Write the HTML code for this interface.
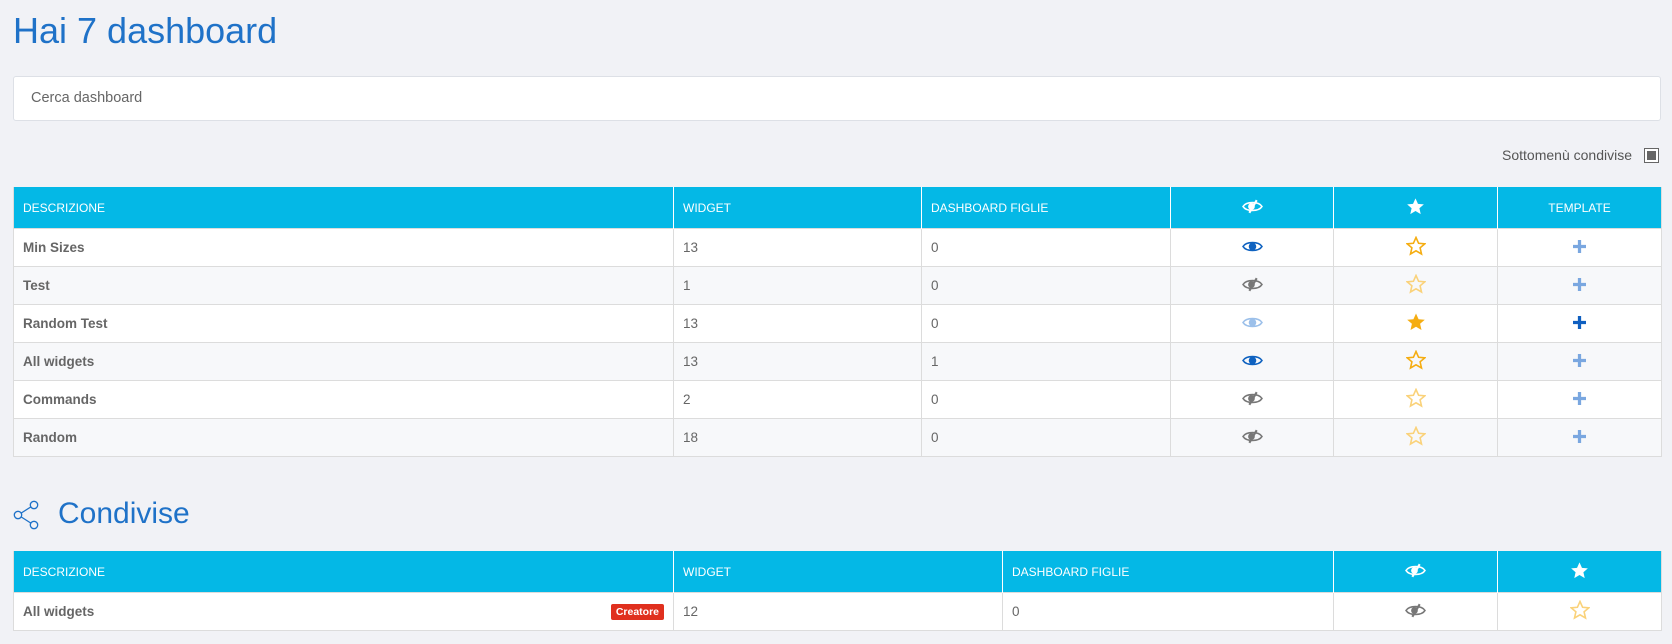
<!DOCTYPE html>
<html><head><meta charset="utf-8"><style>
body{margin:0;background:#f1f2f6;font-family:"Liberation Sans",sans-serif;width:1672px;height:644px;overflow:hidden;position:relative}
h1{position:absolute;left:13px;top:10px;margin:0;font-weight:normal;font-size:36px;color:#1f72c8}
.search{position:absolute;left:13px;top:76px;width:1648px;height:45px;background:#fff;border:1px solid #dde0e6;border-radius:3px;box-sizing:border-box;padding:13px 17px;font-size:14.5px;color:#666}
.sub{position:absolute;right:40px;top:147px;font-size:14px;color:#555}
.cb{position:absolute;left:1644px;top:148px;width:15px;height:15px;border:1px solid #666;background:#fff;box-sizing:border-box}
.cb:after{content:"";position:absolute;left:2px;top:2px;width:9px;height:9px;background:#666}
table{position:absolute;left:13px;border-collapse:collapse;table-layout:fixed;width:1649px;font-size:13.5px}
th{background:#04b8e6;color:#fff;font-weight:normal;font-size:12px;text-align:left;height:41px;padding:0 9px;border-left:1px solid #fff;border-right:1px solid #fff}
th:first-child{border-left:1px solid #dcdcdc}th:last-child{border-right:1px solid #dcdcdc}
td{height:37px;padding:0 9px;border:1px solid #dcdcdc;color:#666;background:#fff}
tr.g td{background:#f7f8fa}
td.b{font-weight:bold}
.c{text-align:center}
h2{position:absolute;left:58px;top:497px;margin:0;font-weight:normal;font-size:30px;color:#1f72c8}
.badge{float:right;background:#e0301e;color:#fff;font-size:10.5px;font-weight:bold;padding:2px 5px;border-radius:2px}
</style></head><body>
<h1>Hai 7 dashboard</h1>
<div class="search">Cerca dashboard</div>
<div class="sub">Sottomenù condivise</div><div class="cb"></div>
<svg width="0" height="0" style="position:absolute"><defs>
<symbol id="eye" viewBox="0 0 20 12"><path d="M1 6C4 1 16 1 19 6C16 11 4 11 1 6Z" fill="none" stroke="currentColor" stroke-width="1.6"/><circle cx="10" cy="6" r="3.6" fill="currentColor"/></symbol>
<symbol id="eyes" viewBox="0 0 20 14"><path d="M1 7C4 2 16 2 19 7C16 12 4 12 1 7Z" fill="none" stroke="currentColor" stroke-width="1.6"/><circle cx="9" cy="7" r="3.2" fill="currentColor"/><path d="M14 1L7 13" stroke="currentColor" stroke-width="2"/></symbol>
<symbol id="star" viewBox="0 0 20 20"><path d="M10 1.5L12.6 7.3L18.8 7.8L14.1 11.8L15.5 18L10 14.8L4.5 18L5.9 11.8L1.2 7.8L7.4 7.3Z"/></symbol>
<symbol id="plus" viewBox="0 0 12 12"><path d="M6 0V12M0 6H12" stroke="currentColor" stroke-width="3"/></symbol>
</defs></svg>
<table style="top:187px">
<colgroup><col style="width:660px"><col style="width:248px"><col style="width:249px"><col style="width:163px"><col style="width:164px"><col></colgroup>
<tr><th>DESCRIZIONE</th><th>WIDGET</th><th>DASHBOARD FIGLIE</th><th class="c"><svg width="21" height="15" style="color:#fff"><use href="#eyes"/></svg></th><th class="c"><svg width="19" height="19" fill="#fff"><use href="#star"/></svg></th><th class="c">TEMPLATE</th></tr>
<tr><td class="b">Min Sizes</td><td>13</td><td>0</td><td class="c"><svg width="21" height="13" style="color:#0f62c0"><use href="#eye"/></svg></td><td class="c"><svg width="20" height="20" fill="none" stroke="#f5ad12" stroke-width="1.6"><use href="#star"/></svg></td><td class="c"><svg width="13" height="13" style="color:#7aa7e0"><use href="#plus"/></svg></td></tr>
<tr class="g"><td class="b">Test</td><td>1</td><td>0</td><td class="c"><svg width="21" height="15" style="color:#777"><use href="#eyes"/></svg></td><td class="c"><svg width="20" height="20" fill="none" stroke="#fad27a" stroke-width="1.6"><use href="#star"/></svg></td><td class="c"><svg width="13" height="13" style="color:#7aa7e0"><use href="#plus"/></svg></td></tr>
<tr><td class="b">Random Test</td><td>13</td><td>0</td><td class="c"><svg width="21" height="13" style="color:#9cc0ea"><use href="#eye"/></svg></td><td class="c"><svg width="20" height="20" fill="#f5ad12"><use href="#star"/></svg></td><td class="c"><svg width="13" height="13" style="color:#0f5fc0"><use href="#plus"/></svg></td></tr>
<tr class="g"><td class="b">All widgets</td><td>13</td><td>1</td><td class="c"><svg width="21" height="13" style="color:#0f62c0"><use href="#eye"/></svg></td><td class="c"><svg width="20" height="20" fill="none" stroke="#f5ad12" stroke-width="1.6"><use href="#star"/></svg></td><td class="c"><svg width="13" height="13" style="color:#7aa7e0"><use href="#plus"/></svg></td></tr>
<tr><td class="b">Commands</td><td>2</td><td>0</td><td class="c"><svg width="21" height="15" style="color:#777"><use href="#eyes"/></svg></td><td class="c"><svg width="20" height="20" fill="none" stroke="#fad27a" stroke-width="1.6"><use href="#star"/></svg></td><td class="c"><svg width="13" height="13" style="color:#7aa7e0"><use href="#plus"/></svg></td></tr>
<tr class="g"><td class="b">Random</td><td>18</td><td>0</td><td class="c"><svg width="21" height="15" style="color:#777"><use href="#eyes"/></svg></td><td class="c"><svg width="20" height="20" fill="none" stroke="#fad27a" stroke-width="1.6"><use href="#star"/></svg></td><td class="c"><svg width="13" height="13" style="color:#7aa7e0"><use href="#plus"/></svg></td></tr>
</table>
<svg style="position:absolute;left:13px;top:500px" width="28" height="30" fill="none" stroke="#1f72c8" stroke-width="1.3"><circle cx="21" cy="5" r="3.7"/><circle cx="5" cy="15" r="3.7"/><circle cx="21" cy="25" r="3.7"/><path d="M8.3 13L17.7 7M8.3 17L17.7 23"/></svg>
<h2>Condivise</h2>
<table style="top:551px">
<colgroup><col style="width:660px"><col style="width:329px"><col style="width:331px"><col style="width:164px"><col></colgroup>
<tr><th>DESCRIZIONE</th><th>WIDGET</th><th>DASHBOARD FIGLIE</th><th class="c"><svg width="21" height="15" style="color:#fff"><use href="#eyes"/></svg></th><th class="c"><svg width="19" height="19" fill="#fff"><use href="#star"/></svg></th></tr>
<tr><td class="b">All widgets <span class="badge">Creatore</span></td><td>12</td><td>0</td><td class="c"><svg width="21" height="15" style="color:#777"><use href="#eyes"/></svg></td><td class="c"><svg width="20" height="20" fill="none" stroke="#fad27a" stroke-width="1.6"><use href="#star"/></svg></td></tr>
</table>
</body></html>
